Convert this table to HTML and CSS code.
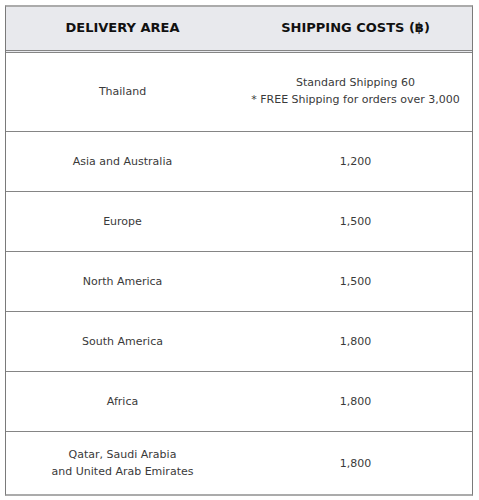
FILE: index.html
```html
<!DOCTYPE html>
<html>
<head>
<meta charset="utf-8">
<link rel="stylesheet" href="styles.css">
</head>
<body>
<div class="rates">
  <div class="head">
    <div>DELIVERY AREA</div>
    <div>SHIPPING COSTS (฿)</div>
  </div>
  <div class="row tall">
    <div>Thailand</div>
    <div>Standard Shipping 60<br>* FREE Shipping for orders over 3,000</div>
  </div>
  <div class="row">
    <div>Asia and Australia</div>
    <div>1,200</div>
  </div>
  <div class="row">
    <div>Europe</div>
    <div>1,500</div>
  </div>
  <div class="row">
    <div>North America</div>
    <div>1,500</div>
  </div>
  <div class="row">
    <div>South America</div>
    <div>1,800</div>
  </div>
  <div class="row">
    <div>Africa</div>
    <div>1,800</div>
  </div>
  <div class="row last">
    <div>Qatar, Saudi Arabia<br>and United Arab Emirates</div>
    <div>1,800</div>
  </div>
</div>
</body>
</html>
```
FILE: styles.css
```css
html, body {
  margin: 0;
  padding: 0;
  background: #ffffff;
}
body {
  font-family: "DejaVu Sans", "Open Sans", sans-serif;
}
.rates {
  margin: 5px 0 0 5px;
  width: 468px;
  box-sizing: border-box;
  border-left: 1px solid #7a7a7a;
  border-right: 1px solid #7a7a7a;
  border-top: 2px solid #ababab;
  border-bottom: 2px solid #ababab;
}
.head, .row {
  display: grid;
  grid-template-columns: 1fr 1fr;
  align-items: center;
  text-align: center;
  box-sizing: border-box;
}
.head {
  height: 46px;
  padding-bottom: 3px;
  background: #e8e9ed;
  border-bottom: 3px double #858585;
  font-weight: 700;
  font-size: 13px;
  color: #111;
}
.row {
  height: 60px;
  border-bottom: 1px solid #858585;
  font-size: 11px;
  line-height: 17px;
  color: #3a3a3a;
}
.row.tall {
  height: 79px;
  padding-bottom: 2px;
}
.row.last {
  height: 62px;
  border-bottom: none;
}
```
